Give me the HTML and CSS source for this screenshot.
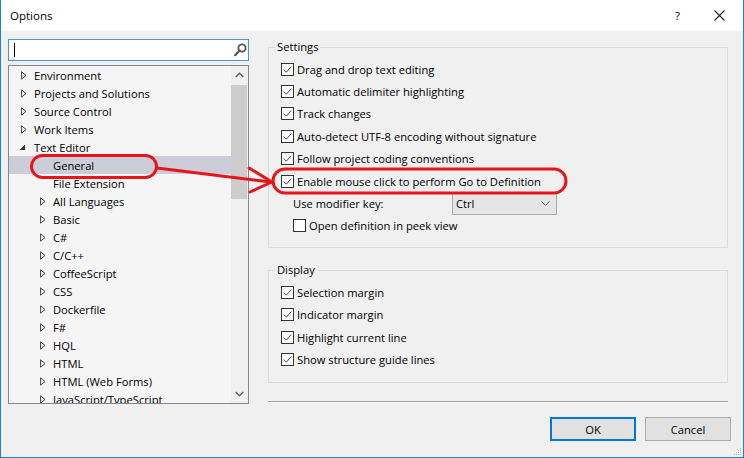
FILE: index.html
```html
<!DOCTYPE html>
<html>
<head>
<meta charset="utf-8">
<title>Options</title>
<link rel="stylesheet" href="styles.css">
</head>
<body>
<div class="window">
  <div class="titlebar">
    <span class="title">Options</span>
    <span class="help">?</span>
    <svg class="close" width="11" height="11" viewBox="0 0 11 11"><path d="M0.5 0.5 L10.5 10.5 M10.5 0.5 L0.5 10.5" stroke="#222" stroke-width="1.1" fill="none"/></svg>
  </div>
  <div class="main">
    <div class="left">
      <div class="search">
        <span class="caret"></span>
        <svg class="magnifier" width="13" height="14" viewBox="0 0 13 14"><circle cx="8" cy="5" r="3.6" stroke="#555" stroke-width="1.8" fill="none"/><path d="M5.6 7.6 L1.2 12.2" stroke="#555" stroke-width="2.2" stroke-linecap="round"/></svg>
      </div>
      <div class="tree">
        <ul class="items">
          <li class="row l0"><span class="tw"><svg width="6" height="9" viewBox="0 0 6 9"><path d="M0.6 0.8 L5 4.5 L0.6 8.2 Z" fill="none" stroke="#444" stroke-width="1"/></svg></span>Environment</li>
          <li class="row l0"><span class="tw"><svg width="6" height="9" viewBox="0 0 6 9"><path d="M0.6 0.8 L5 4.5 L0.6 8.2 Z" fill="none" stroke="#444" stroke-width="1"/></svg></span>Projects and Solutions</li>
          <li class="row l0"><span class="tw"><svg width="6" height="9" viewBox="0 0 6 9"><path d="M0.6 0.8 L5 4.5 L0.6 8.2 Z" fill="none" stroke="#444" stroke-width="1"/></svg></span>Source Control</li>
          <li class="row l0"><span class="tw"><svg width="6" height="9" viewBox="0 0 6 9"><path d="M0.6 0.8 L5 4.5 L0.6 8.2 Z" fill="none" stroke="#444" stroke-width="1"/></svg></span>Work Items</li>
          <li class="row l0"><span class="tw open"><svg width="7" height="7" viewBox="0 0 7 7"><path d="M6 0.5 L6 6 L0.5 6 Z" fill="#333"/></svg></span>Text Editor</li>
          <li class="row l1 selected"><span class="tw"></span>General</li>
          <li class="row l1"><span class="tw"></span>File Extension</li>
          <li class="row l1"><span class="tw"><svg width="6" height="9" viewBox="0 0 6 9"><path d="M0.6 0.8 L5 4.5 L0.6 8.2 Z" fill="none" stroke="#444" stroke-width="1"/></svg></span>All Languages</li>
          <li class="row l1"><span class="tw"><svg width="6" height="9" viewBox="0 0 6 9"><path d="M0.6 0.8 L5 4.5 L0.6 8.2 Z" fill="none" stroke="#444" stroke-width="1"/></svg></span>Basic</li>
          <li class="row l1"><span class="tw"><svg width="6" height="9" viewBox="0 0 6 9"><path d="M0.6 0.8 L5 4.5 L0.6 8.2 Z" fill="none" stroke="#444" stroke-width="1"/></svg></span>C#</li>
          <li class="row l1"><span class="tw"><svg width="6" height="9" viewBox="0 0 6 9"><path d="M0.6 0.8 L5 4.5 L0.6 8.2 Z" fill="none" stroke="#444" stroke-width="1"/></svg></span>C/C++</li>
          <li class="row l1"><span class="tw"><svg width="6" height="9" viewBox="0 0 6 9"><path d="M0.6 0.8 L5 4.5 L0.6 8.2 Z" fill="none" stroke="#444" stroke-width="1"/></svg></span>CoffeeScript</li>
          <li class="row l1"><span class="tw"><svg width="6" height="9" viewBox="0 0 6 9"><path d="M0.6 0.8 L5 4.5 L0.6 8.2 Z" fill="none" stroke="#444" stroke-width="1"/></svg></span>CSS</li>
          <li class="row l1"><span class="tw"><svg width="6" height="9" viewBox="0 0 6 9"><path d="M0.6 0.8 L5 4.5 L0.6 8.2 Z" fill="none" stroke="#444" stroke-width="1"/></svg></span>Dockerfile</li>
          <li class="row l1"><span class="tw"><svg width="6" height="9" viewBox="0 0 6 9"><path d="M0.6 0.8 L5 4.5 L0.6 8.2 Z" fill="none" stroke="#444" stroke-width="1"/></svg></span>F#</li>
          <li class="row l1"><span class="tw"><svg width="6" height="9" viewBox="0 0 6 9"><path d="M0.6 0.8 L5 4.5 L0.6 8.2 Z" fill="none" stroke="#444" stroke-width="1"/></svg></span>HQL</li>
          <li class="row l1"><span class="tw"><svg width="6" height="9" viewBox="0 0 6 9"><path d="M0.6 0.8 L5 4.5 L0.6 8.2 Z" fill="none" stroke="#444" stroke-width="1"/></svg></span>HTML</li>
          <li class="row l1"><span class="tw"><svg width="6" height="9" viewBox="0 0 6 9"><path d="M0.6 0.8 L5 4.5 L0.6 8.2 Z" fill="none" stroke="#444" stroke-width="1"/></svg></span>HTML (Web Forms)</li>
          <li class="row l1"><span class="tw"><svg width="6" height="9" viewBox="0 0 6 9"><path d="M0.6 0.8 L5 4.5 L0.6 8.2 Z" fill="none" stroke="#444" stroke-width="1"/></svg></span>JavaScript/TypeScript</li>
        </ul>
        <div class="scrollbar">
          <div class="sb-btn"><svg width="9" height="6" viewBox="0 0 9 6"><path d="M0.8 5 L4.5 1.3 L8.2 5" fill="none" stroke="#606060" stroke-width="1.6"/></svg></div>
          <div class="sb-track"><div class="thumb"></div></div>
          <div class="sb-btn"><svg width="9" height="6" viewBox="0 0 9 6"><path d="M0.8 1 L4.5 4.7 L8.2 1" fill="none" stroke="#606060" stroke-width="1.6"/></svg></div>
        </div>
      </div>
    </div>
    <div class="right">
      <fieldset class="group settings">
        <legend>Settings</legend>
        <div class="group-body">
          <div class="check"><span class="box"><svg width="11" height="11" viewBox="0 0 11 11"><path d="M1.8 5.6 L4.3 8.2 L9.3 2.6" fill="none" stroke="#444" stroke-width="1"/></svg></span>Drag and drop text editing</div>
          <div class="check"><span class="box"><svg width="11" height="11" viewBox="0 0 11 11"><path d="M1.8 5.6 L4.3 8.2 L9.3 2.6" fill="none" stroke="#444" stroke-width="1"/></svg></span>Automatic delimiter highlighting</div>
          <div class="check"><span class="box"><svg width="11" height="11" viewBox="0 0 11 11"><path d="M1.8 5.6 L4.3 8.2 L9.3 2.6" fill="none" stroke="#444" stroke-width="1"/></svg></span>Track changes</div>
          <div class="check"><span class="box"><svg width="11" height="11" viewBox="0 0 11 11"><path d="M1.8 5.6 L4.3 8.2 L9.3 2.6" fill="none" stroke="#444" stroke-width="1"/></svg></span>Auto-detect UTF-8 encoding without signature</div>
          <div class="check"><span class="box"><svg width="11" height="11" viewBox="0 0 11 11"><path d="M1.8 5.6 L4.3 8.2 L9.3 2.6" fill="none" stroke="#444" stroke-width="1"/></svg></span>Follow project coding conventions</div>
          <div class="check"><span class="box"><svg width="11" height="11" viewBox="0 0 11 11"><path d="M1.8 5.6 L4.3 8.2 L9.3 2.6" fill="none" stroke="#444" stroke-width="1"/></svg></span>Enable mouse click to perform Go to Definition</div>
          <div class="modifier">
            <span class="mod-label">Use modifier key:</span>
            <div class="select"><span>Ctrl</span><svg width="9" height="5" viewBox="0 0 9 5"><path d="M0.5 0.5 L4.5 4.3 L8.5 0.5" fill="none" stroke="#555" stroke-width="1"/></svg></div>
          </div>
          <div class="check sub"><span class="box"></span>Open definition in peek view</div>
        </div>
      </fieldset>
      <fieldset class="group display">
        <legend>Display</legend>
        <div class="group-body">
          <div class="check"><span class="box"><svg width="11" height="11" viewBox="0 0 11 11"><path d="M1.8 5.6 L4.3 8.2 L9.3 2.6" fill="none" stroke="#444" stroke-width="1"/></svg></span>Selection margin</div>
          <div class="check"><span class="box"><svg width="11" height="11" viewBox="0 0 11 11"><path d="M1.8 5.6 L4.3 8.2 L9.3 2.6" fill="none" stroke="#444" stroke-width="1"/></svg></span>Indicator margin</div>
          <div class="check"><span class="box"><svg width="11" height="11" viewBox="0 0 11 11"><path d="M1.8 5.6 L4.3 8.2 L9.3 2.6" fill="none" stroke="#444" stroke-width="1"/></svg></span>Highlight current line</div>
          <div class="check"><span class="box"><svg width="11" height="11" viewBox="0 0 11 11"><path d="M1.8 5.6 L4.3 8.2 L9.3 2.6" fill="none" stroke="#444" stroke-width="1"/></svg></span>Show structure guide lines</div>
        </div>
      </fieldset>
      <div class="separator"></div>
    </div>
  </div>
  <div class="footer">
    <button class="btn primary">OK</button>
    <button class="btn">Cancel</button>
    <svg class="grip" width="9" height="9" viewBox="0 0 9 9"><g fill="#b8b8b8"><rect x="7" y="1" width="1" height="1"/><rect x="5" y="3" width="1" height="1"/><rect x="7" y="3" width="1" height="1"/><rect x="3" y="5" width="1" height="1"/><rect x="5" y="5" width="1" height="1"/><rect x="7" y="5" width="1" height="1"/><rect x="1" y="7" width="1" height="1"/><rect x="3" y="7" width="1" height="1"/><rect x="5" y="7" width="1" height="1"/><rect x="7" y="7" width="1" height="1"/></g></svg>
  </div>
  <svg class="annot" width="744" height="458" viewBox="0 0 744 458">
    <g fill="none" stroke="#e8141a" stroke-width="3" stroke-linecap="round" stroke-linejoin="round">
      <rect x="31.5" y="155.5" width="125" height="22" rx="11"/>
      <rect x="273" y="169" width="293" height="24" rx="12"/>
      <path d="M157 168 L271 182"/>
      <path d="M249 168 L272 182 L250 192"/>
    </g>
  </svg>
</div>
</body>
</html>
```
FILE: styles.css
```css
* { box-sizing: border-box; }
html, body { margin: 0; padding: 0; background: #fff; }
body {
  font-family: "Open Sans", "Noto Sans", sans-serif;
  font-size: 11.2px;
  color: #000;
}
.window {
  position: relative;
  width: 744px;
  height: 458px;
  border: 1px solid #1883d7;
  border-top: none;
  background: #f0f0f0;
  display: flex;
  flex-direction: column;
  overflow: hidden;
}
.titlebar {
  height: 31px;
  flex: none;
  background: #fff;
  display: flex;
  align-items: center;
  padding: 0 18px 1px 9px;
}
.title { font-size: 11.5px; }
.help { margin-left: auto; margin-right: 34px; font-size: 11.5px; }
.close { display: block; }

.main {
  height: 373px;
  flex: none;
  display: flex;
}
.left {
  width: 248px;
  padding: 8px 0 0 7px;
  display: flex;
  flex-direction: column;
  flex: none;
}
.search {
  height: 22px;
  width: 241px;
  border: 1px solid #4f92d2;
  background: #fff;
  display: flex;
  align-items: center;
}
.caret { width: 1px; height: 14px; background: #000; margin-left: 5px; }
.magnifier { margin-left: auto; margin-right: 1px; display: block; }

.tree {
  margin-top: 4px;
  width: 241px;
  height: 339px;
  border: 1px solid #828790;
  background: #f5f5f5;
  display: flex;
  overflow: hidden;
}
.items {
  list-style: none;
  margin: 0;
  padding: 0;
  flex: 1;
  overflow: hidden;
}
.row {
  height: 18px;
  line-height: 17px;
  padding-top: 1px;
  display: flex;
  align-items: center;
  white-space: nowrap;
}
.row.l0 { padding-left: 9px; }
.row.l1 { padding-left: 28px; }
.row.selected { background: #cbcdd8; }
.tw {
  width: 16px;
  height: 17px;
  flex: none;
  display: flex;
  align-items: center;
  padding-left: 3px;
}
.tw svg { display: block; }
.tw.open { padding-left: 1px; }

.scrollbar {
  width: 17px;
  flex: none;
  display: flex;
  flex-direction: column;
  background: #f0f0f0;
}
.sb-btn {
  height: 18px;
  display: flex;
  align-items: center;
  justify-content: center;
  flex: none;
}
.sb-track { flex: 1; padding: 1px 1px 0 0; }
.thumb { height: 114px; background: #cdcdcd; }

.right {
  width: 460px;
  margin-left: 19px;
  padding-top: 8px;
  display: flex;
  flex-direction: column;
  flex: none;
}
.group {
  margin: 0;
  padding: 0;
  width: 460px;
  border: 1px solid #dcdcdc;
  min-width: 0;
}
.group legend {
  margin-left: 6px;
  padding: 0 2px;
  line-height: 16px;
  height: 16px;
}
.group-body { padding: 3px 0 10px 12px; }
.display { margin-top: 14px; }
.display .group-body { padding-bottom: 11px; }

.check {
  height: 22.4px;
  display: flex;
  align-items: center;
  white-space: nowrap;
}
.check.sub { padding-left: 12px; }
.box {
  width: 13px;
  height: 13px;
  border: 1px solid #333;
  background: #fff;
  margin-right: 3px;
  flex: none;
  display: block;
}
.box svg { display: block; }
.modifier {
  height: 22.4px;
  display: flex;
  align-items: center;
  padding-left: 12px;
}
.mod-label { width: 159px; }
.select {
  width: 105px;
  height: 22px;
  border: 1px solid #acacac;
  background: #e5e5e5;
  display: flex;
  align-items: center;
  padding: 0 6px 0 3px;
}
.select svg { margin-left: auto; display: block; }

.separator {
  margin-top: auto;
  margin-bottom: 1px;
  height: 2px;
  border-top: 1px solid #a0a0a0;
  border-bottom: 1px solid #fff;
}

.footer {
  position: relative;
  flex: 1;
  display: flex;
  justify-content: flex-end;
  align-items: flex-start;
  gap: 9px;
  padding: 13px 12px 0 0;
}
.btn {
  width: 86px;
  height: 24px;
  margin: 0;
  padding: 0;
  font: inherit;
  color: #000;
  background: #e1e1e1;
  border: 1px solid #adadad;
  border-radius: 0;
}
.btn.primary { border: 2px solid #0078d7; }
.grip { position: absolute; right: 1px; bottom: 1px; }

.annot {
  position: absolute;
  left: -1px;
  top: 0;
  pointer-events: none;
}
```
